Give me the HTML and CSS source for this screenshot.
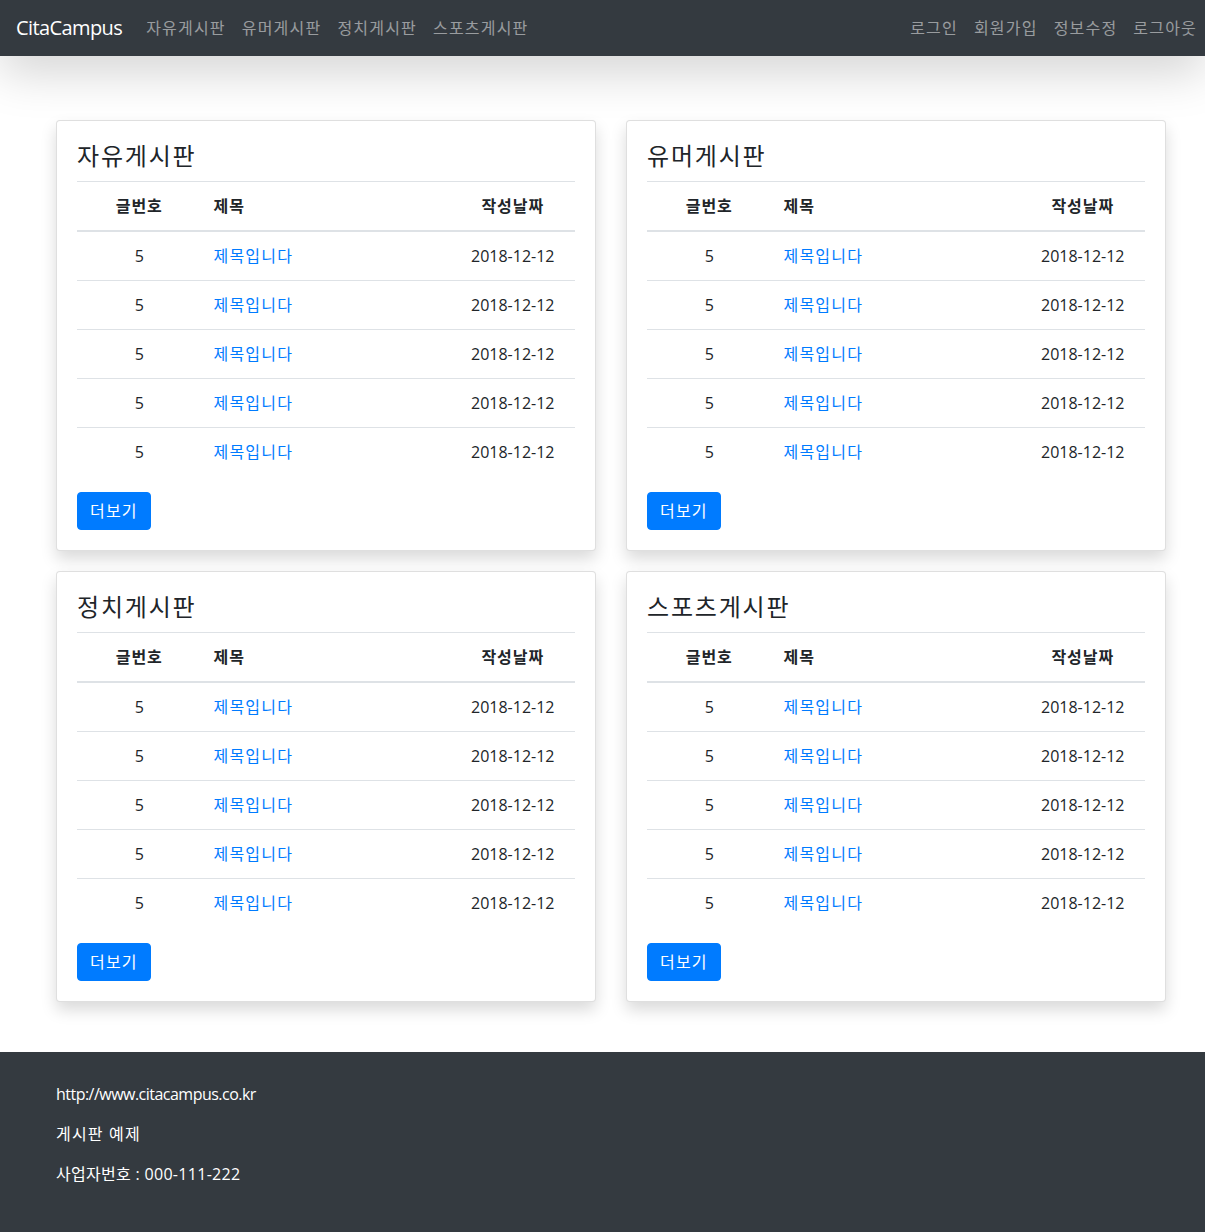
FILE: index.html
```html
<!DOCTYPE html>
<html lang="ko">
<head>
<meta charset="utf-8">
<title>CitaCampus</title>
<link rel="stylesheet" href="styles.css">
</head>
<body>
<nav class="navbar">
  <a class="brand" href="#">CitaCampus</a>
  <ul class="nav">
    <li><a href="#">자유게시판</a></li>
    <li><a href="#">유머게시판</a></li>
    <li><a href="#">정치게시판</a></li>
    <li><a href="#">스포츠게시판</a></li>
  </ul>
  <ul class="nav nav-right">
    <li><a href="#">로그인</a></li>
    <li><a href="#">회원가입</a></li>
    <li><a href="#">정보수정</a></li>
    <li><a href="#">로그아웃</a></li>
  </ul>
</nav>

<main class="main">
  <div class="grid">
    <section class="card">
      <h3 class="card-title">자유게시판</h3>
      <table class="table">
        <thead><tr><th class="c-num">글번호</th><th class="c-title">제목</th><th class="c-date">작성날짜</th></tr></thead>
        <tbody>
          <tr><td class="c-num">5</td><td class="c-title"><a href="#">제목입니다</a></td><td class="c-date">2018-12-12</td></tr>
          <tr><td class="c-num">5</td><td class="c-title"><a href="#">제목입니다</a></td><td class="c-date">2018-12-12</td></tr>
          <tr><td class="c-num">5</td><td class="c-title"><a href="#">제목입니다</a></td><td class="c-date">2018-12-12</td></tr>
          <tr><td class="c-num">5</td><td class="c-title"><a href="#">제목입니다</a></td><td class="c-date">2018-12-12</td></tr>
          <tr><td class="c-num">5</td><td class="c-title"><a href="#">제목입니다</a></td><td class="c-date">2018-12-12</td></tr>
        </tbody>
      </table>
      <a class="btn" href="#">더보기</a>
    </section>
    <section class="card">
      <h3 class="card-title">유머게시판</h3>
      <table class="table">
        <thead><tr><th class="c-num">글번호</th><th class="c-title">제목</th><th class="c-date">작성날짜</th></tr></thead>
        <tbody>
          <tr><td class="c-num">5</td><td class="c-title"><a href="#">제목입니다</a></td><td class="c-date">2018-12-12</td></tr>
          <tr><td class="c-num">5</td><td class="c-title"><a href="#">제목입니다</a></td><td class="c-date">2018-12-12</td></tr>
          <tr><td class="c-num">5</td><td class="c-title"><a href="#">제목입니다</a></td><td class="c-date">2018-12-12</td></tr>
          <tr><td class="c-num">5</td><td class="c-title"><a href="#">제목입니다</a></td><td class="c-date">2018-12-12</td></tr>
          <tr><td class="c-num">5</td><td class="c-title"><a href="#">제목입니다</a></td><td class="c-date">2018-12-12</td></tr>
        </tbody>
      </table>
      <a class="btn" href="#">더보기</a>
    </section>
    <section class="card">
      <h3 class="card-title">정치게시판</h3>
      <table class="table">
        <thead><tr><th class="c-num">글번호</th><th class="c-title">제목</th><th class="c-date">작성날짜</th></tr></thead>
        <tbody>
          <tr><td class="c-num">5</td><td class="c-title"><a href="#">제목입니다</a></td><td class="c-date">2018-12-12</td></tr>
          <tr><td class="c-num">5</td><td class="c-title"><a href="#">제목입니다</a></td><td class="c-date">2018-12-12</td></tr>
          <tr><td class="c-num">5</td><td class="c-title"><a href="#">제목입니다</a></td><td class="c-date">2018-12-12</td></tr>
          <tr><td class="c-num">5</td><td class="c-title"><a href="#">제목입니다</a></td><td class="c-date">2018-12-12</td></tr>
          <tr><td class="c-num">5</td><td class="c-title"><a href="#">제목입니다</a></td><td class="c-date">2018-12-12</td></tr>
        </tbody>
      </table>
      <a class="btn" href="#">더보기</a>
    </section>
    <section class="card">
      <h3 class="card-title">스포츠게시판</h3>
      <table class="table">
        <thead><tr><th class="c-num">글번호</th><th class="c-title">제목</th><th class="c-date">작성날짜</th></tr></thead>
        <tbody>
          <tr><td class="c-num">5</td><td class="c-title"><a href="#">제목입니다</a></td><td class="c-date">2018-12-12</td></tr>
          <tr><td class="c-num">5</td><td class="c-title"><a href="#">제목입니다</a></td><td class="c-date">2018-12-12</td></tr>
          <tr><td class="c-num">5</td><td class="c-title"><a href="#">제목입니다</a></td><td class="c-date">2018-12-12</td></tr>
          <tr><td class="c-num">5</td><td class="c-title"><a href="#">제목입니다</a></td><td class="c-date">2018-12-12</td></tr>
          <tr><td class="c-num">5</td><td class="c-title"><a href="#">제목입니다</a></td><td class="c-date">2018-12-12</td></tr>
        </tbody>
      </table>
      <a class="btn" href="#">더보기</a>
    </section>
  </div>
</main>

<footer class="footer">
  <p class="f-url">http://www.citacampus.co.kr</p>
  <p class="f-ko">게시판 예제</p>
  <p class="f-mix">사업자번호 : 000-111-222</p>
</footer>
</body>
</html>
```

FILE: styles.css
```css
* { box-sizing: border-box; }

html, body {
  margin: 0;
  padding: 0;
}

body {
  font-family: "Open Sans", "Noto Sans CJK KR", sans-serif;
  font-size: 16px;
  line-height: 24px;
  color: #212529;
  background: #fff;
}

a { text-decoration: none; }

.navbar {
  position: relative;
  z-index: 2;
  display: flex;
  align-items: center;
  height: 56px;
  padding: 0 0 0 16px;
  background: #343a40;
  box-shadow: 0 16px 48px rgba(0, 0, 0, 0.175);
}

.brand {
  color: #fff;
  font-size: 20px;
  line-height: 30px;
  margin-right: 16px;
  letter-spacing: -0.6px;
}

.nav {
  display: flex;
  list-style: none;
  margin: 0;
  padding: 0;
}

.nav a {
  display: block;
  padding: 8px;
  color: rgba(255, 255, 255, 0.5);
  font-size: 16px;
  line-height: 24px;
  letter-spacing: 0.075em;
}

.nav-right { margin-left: auto; }

.main {
  padding: 64px 0 50px 56px;
}

.grid {
  display: grid;
  grid-template-columns: 540px 540px;
  column-gap: 30px;
  row-gap: 20px;
}

.card {
  background: #fff;
  border: 1px solid rgba(0, 0, 0, 0.125);
  border-radius: 4px;
  padding: 20px;
  box-shadow: 0 8px 16px rgba(0, 0, 0, 0.15);
}

.card-title {
  margin: 0 0 11px;
  font-size: 24px;
  line-height: 29px;
  font-weight: 400;
  letter-spacing: 0.075em;
}

.table {
  width: 100%;
  border-collapse: collapse;
  margin-bottom: 16px;
  table-layout: fixed;
}

.table th,
.table td {
  padding: 12px;
  border-top: 1px solid #dee2e6;
  vertical-align: top;
}

.table thead th {
  border-bottom: 2px solid #dee2e6;
  font-weight: 700;
  letter-spacing: 0.06em;
}

.table .c-num { width: 25%; text-align: center; }
.table .c-title { width: 50%; text-align: left; }
.table .c-date { width: 25%; text-align: center; }

.table a {
  color: #007bff;
  letter-spacing: 0.075em;
}

.btn {
  display: inline-block;
  padding: 6px 12px;
  border: 1px solid #007bff;
  border-radius: 4px;
  background: #007bff;
  color: #fff;
  font-size: 16px;
  line-height: 24px;
  letter-spacing: 0.075em;
}

.footer {
  background: #343a40;
  color: #fff;
  padding: 30px 56px;
}

.footer p {
  margin: 0 0 16px;
}

.footer .f-url { letter-spacing: -0.52px; }
.footer .f-ko { letter-spacing: 0.075em; }
.footer .f-mix { letter-spacing: 0.3px; }
```
